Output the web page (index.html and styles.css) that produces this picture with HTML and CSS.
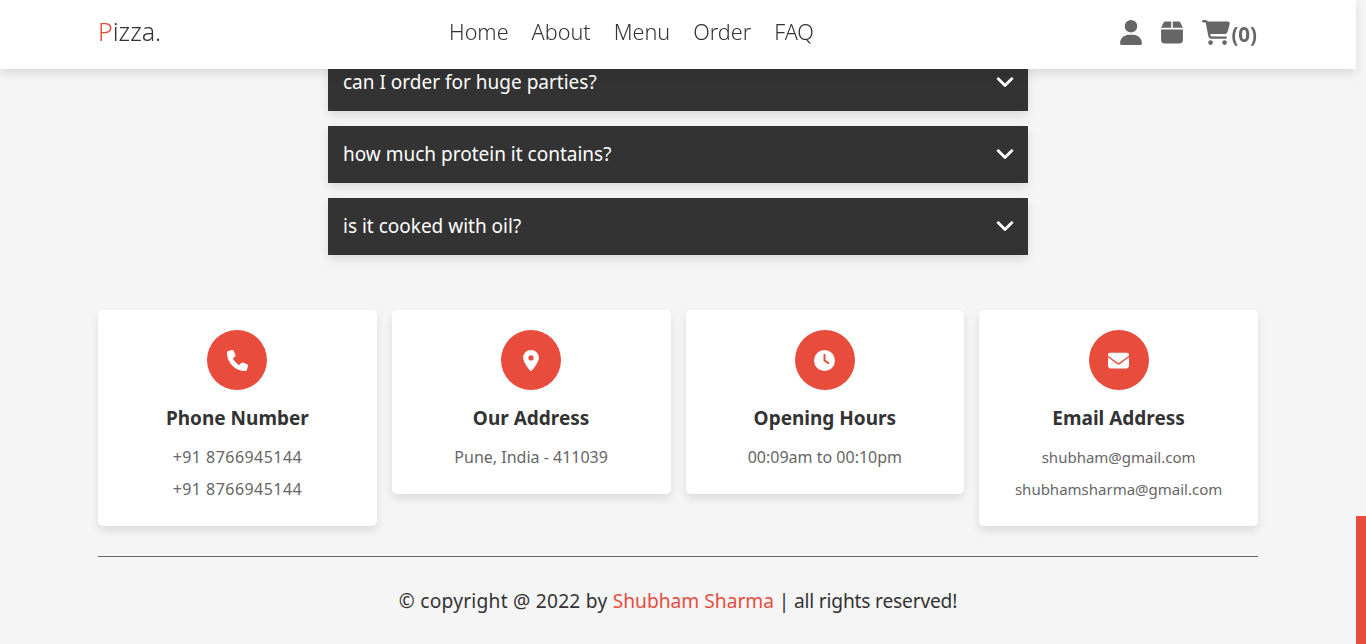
FILE: index.html
```html
<!DOCTYPE html>
<html lang="en">
<head>
<meta charset="utf-8">
<title>Pizza.</title>
<link rel="stylesheet" href="styles.css">
</head>
<body>
<header class="header">
  <div class="container nav-row">
    <a class="logo"><span class="red">P</span>izza.</a>
    <nav class="nav">
      <a>Home</a><a>About</a><a>Menu</a><a>Order</a><a>FAQ</a>
    </nav>
    <div class="actions">
      <svg class="ic-user" viewBox="0 0 448 512"><path d="M224 256A128 128 0 1 0 224 0a128 128 0 1 0 0 256zm-45.7 48C79.8 304 0 383.8 0 482.3C0 498.7 13.3 512 29.7 512H418.3c16.4 0 29.7-13.3 29.7-29.7C448 383.8 368.2 304 269.7 304H178.3z"/></svg>
      <svg class="ic-box" viewBox="0 0 448 512"><path d="M50.7 58.5L0 160H208V32H93.7C75.5 32 58.9 42.3 50.7 58.5zM240 160H448L397.3 58.5C389.1 42.3 372.5 32 354.3 32H240V160zm208 32H0V416c0 35.3 28.7 64 64 64H384c35.3 0 64-28.7 64-64V192z"/></svg>
      <span class="cart">
        <svg class="ic-cart" viewBox="0 0 576 512"><path d="M0 24C0 10.7 10.7 0 24 0H69.5c22 0 41.5 12.8 50.6 32h411c26.3 0 45.5 25 38.6 50.4l-41 152.3c-8.5 31.4-37 53.3-69.5 53.3H170.7l5.4 28.5c2.2 11.3 12.1 19.5 23.6 19.5H488c13.3 0 24 10.7 24 24s-10.7 24-24 24H199.7c-34.6 0-64.3-24.6-70.7-58.5L77.4 54.5c-.7-3.8-4-6.5-7.9-6.5H24C10.7 48 0 37.3 0 24zM128 464a48 48 0 1 1 96 0 48 48 0 1 1 -96 0zm336-48a48 48 0 1 1 0 96 48 48 0 1 1 0-96z"/></svg><span class="count">(0)</span>
      </span>
    </div>
  </div>
</header>

<main class="main">
  <section class="faq">
    <div class="faq-row"><span class="faq-q">can I order for huge parties?</span><svg class="chev" viewBox="0 0 512 512"><path d="M233.4 406.6c12.5 12.5 32.8 12.5 45.3 0l192-192c12.5-12.5 12.5-32.8 0-45.3s-32.8-12.5-45.3 0L256 338.7 86.6 169.4c-12.5-12.5-32.8-12.5-45.3 0s-12.5 32.8 0 45.3l192 192z"/></svg></div>
    <div class="faq-row"><span class="faq-q">how much protein it contains?</span><svg class="chev" viewBox="0 0 512 512"><path d="M233.4 406.6c12.5 12.5 32.8 12.5 45.3 0l192-192c12.5-12.5 12.5-32.8 0-45.3s-32.8-12.5-45.3 0L256 338.7 86.6 169.4c-12.5-12.5-32.8-12.5-45.3 0s-12.5 32.8 0 45.3l192 192z"/></svg></div>
    <div class="faq-row"><span class="faq-q">is it cooked with oil?</span><svg class="chev" viewBox="0 0 512 512"><path d="M233.4 406.6c12.5 12.5 32.8 12.5 45.3 0l192-192c12.5-12.5 12.5-32.8 0-45.3s-32.8-12.5-45.3 0L256 338.7 86.6 169.4c-12.5-12.5-32.8-12.5-45.3 0s-12.5 32.8 0 45.3l192 192z"/></svg></div>
  </section>

  <section class="container cards">
    <article class="card">
      <div class="badge"><svg class="ic-phone" viewBox="0 0 512 512"><path d="M164.9 24.6c-7.7-18.6-28-28.5-47.4-23.2l-88 24C12.1 30.2 0 46 0 64C0 311.4 200.6 512 448 512c18 0 33.8-12.1 38.6-29.5l24-88c5.3-19.4-4.6-39.7-23.2-47.4l-96-40c-16.3-6.8-35.2-2.1-46.3 11.6L304.7 368C234.3 334.7 177.3 277.7 144 207.3L193.3 167c13.7-11.2 18.4-30 11.6-46.3l-40-96z"/></svg></div>
      <h3>Phone Number</h3>
      <p class="tel">+91 8766945144</p>
      <p class="tel">+91 8766945144</p>
    </article>
    <article class="card">
      <div class="badge"><svg class="ic-pin" viewBox="0 0 384 512"><path d="M215.7 499.2C267 435 384 279.4 384 192C384 86 298 0 192 0S0 86 0 192c0 87.4 117 243 168.3 307.2c12.3 15.3 35.1 15.3 47.4 0zM192 256a64 64 0 1 1 0-128 64 64 0 1 1 0 128z"/></svg></div>
      <h3>Our Address</h3>
      <p>Pune, India - 411039</p>
    </article>
    <article class="card">
      <div class="badge"><svg class="ic-clock" viewBox="0 0 512 512"><path d="M256 0a256 256 0 1 1 0 512A256 256 0 1 1 256 0zM232 120V256c0 8 4 15.5 10.7 20l96 64c11 7.4 25.9 4.4 33.3-6.7s4.4-25.9-6.7-33.3L280 243.2V120c0-13.3-10.7-24-24-24s-24 10.7-24 24z"/></svg></div>
      <h3>Opening Hours</h3>
      <p>00:09am to 00:10pm</p>
    </article>
    <article class="card">
      <div class="badge"><svg class="ic-mail" viewBox="0 0 512 512"><path d="M48 64C21.5 64 0 85.5 0 112c0 15.1 7.1 29.3 19.2 38.4L236.8 313.6c11.4 8.5 27 8.5 38.4 0L492.8 150.4c12.1-9.1 19.2-23.3 19.2-38.4c0-26.5-21.5-48-48-48H48zM0 176V384c0 35.3 28.7 64 64 64H448c35.3 0 64-28.7 64-64V176L294.4 339.2c-22.8 17.1-54 17.1-76.8 0L0 176z"/></svg></div>
      <h3>Email Address</h3>
      <p class="email">shubham@gmail.com</p>
      <p class="email">shubhamsharma@gmail.com</p>
    </article>
  </section>

  <footer class="container footer">
    <span class="foot-lead">© copyright @ 2022 by </span><span class="red">Shubham Sharma</span><span class="foot-tail"> | all rights reserved!</span>
  </footer>
</main>
<div class="scroll-thumb"></div>
</body>
</html>
```
FILE: styles.css
```css
* { box-sizing: border-box; margin: 0; padding: 0; }
html, body { height: 644px; overflow: hidden; }
body {
  background: #f5f5f5;
  font-family: "Noto Sans", "Open Sans", sans-serif;
  color: #333;
  width: 1356px;
}
.red { color: #e74c3c; }
.container { width: 1160px; margin: 0 auto; }

.header {
  position: fixed;
  top: 0; left: 0;
  width: 1356px;
  height: 69px;
  background: #fff;
  box-shadow: 0 5px 10px rgba(0,0,0,.1);
  z-index: 10;
}
.nav-row { height: 64px; display: flex; align-items: center; }
.logo { font-size: 25px; font-weight: 300; line-height: 30px; padding-bottom: 2px; color: #333; width: 351px; }
.nav { display: flex; gap: 23px; font-size: 21.6px; font-weight: 300; padding-bottom: 2px; color: #333; }
.actions { display: flex; align-items: center; margin-left: auto; fill: #666; color: #666; }
.ic-user { width: 22px; height: 25px; margin-right: 19px; }
.ic-box { width: 22px; height: 25px; margin-right: 19px; }
.cart { display: flex; align-items: flex-end; margin-right: 1px; }
.ic-cart { width: 28px; height: 25px; margin-right: 1px; }
.count { font-size: 20.5px; font-weight: 700; line-height: 22px; }

.main { padding-top: 54px; }
.faq { width: 700px; margin-left: 328px; display: flex; flex-direction: column; gap: 15px; }
.faq-row {
  height: 57px;
  background: #333;
  color: #fff;
  font-size: 19px;
  padding: 0 14px 0 15px;
  display: flex;
  align-items: center;
  justify-content: space-between;
  box-shadow: 0 5px 10px rgba(0,0,0,.1);
}
.faq-q { padding-bottom: 2px; }
.chev { width: 18px; height: 18px; margin-bottom: 3px; fill: #fff; stroke: #fff; stroke-width: 26px; }

.cards { margin-top: 55px; display: grid; grid-template-columns: repeat(4, 1fr); gap: 15px; align-items: start; }
.card {
  background: #fff;
  border-radius: 5px;
  box-shadow: 0 5px 10px rgba(0,0,0,.1);
  padding: 20px 10px 21px;
  text-align: center;
}
.badge {
  width: 60px; height: 60px;
  border-radius: 50%;
  background: #e74c3c;
  margin: 0 auto 15px;
  display: flex;
  align-items: center;
  justify-content: center;
  fill: #fff;
}
.ic-phone { width: 21px; height: 21px; }
.ic-pin { width: 16px; height: 21px; }
.ic-clock { width: 21px; height: 21px; }
.ic-mail { width: 21px; height: 21px; }
.card h3 { font-size: 19px; line-height: 26px; font-weight: 700; color: #333; margin-bottom: 10px; }
.card p { font-size: 16px; line-height: 32px; color: #666; }
.card .tel { letter-spacing: .45px; }
.card .email { font-size: 15px; }

.footer {
  margin-top: 30px;
  border-top: 1px solid #666;
  padding-top: 30px;
  text-align: center;
  font-size: 19.2px;
  line-height: 27px;
  color: #333;
}
.foot-lead { letter-spacing: .23px; }
.foot-tail { letter-spacing: -.2px; }
.scroll-thumb {
  position: fixed;
  right: 0;
  top: 516px;
  width: 10px;
  height: 128px;
  background: #e74c3c;
}
```
